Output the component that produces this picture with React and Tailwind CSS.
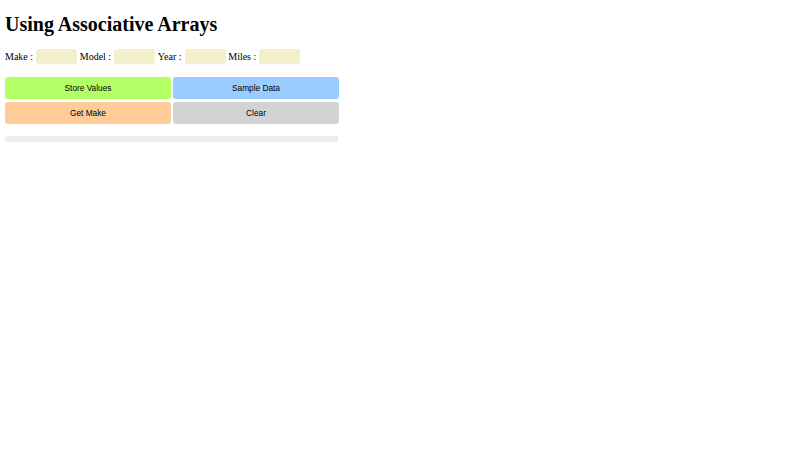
import React from 'react';

// Campos del formulario
const fields = ['Make', 'Model', 'Year', 'Miles'];

const buttons = [
  { label: 'Store Values', color: 'bg-[#b3ff66]' },
  { label: 'Sample Data', color: 'bg-[#99ccff]' },
  { label: 'Get Make', color: 'bg-[#ffcc99]' },
  { label: 'Clear', color: 'bg-[#d3d3d3]' },
];

export default function App() {
  return (
    <div className="min-h-[450px] bg-white px-[5px] pt-[13px] text-black" style={{ fontFamily: '"Liberation Serif", serif' }}>
      <h1 className="text-[20px] font-bold leading-[23px]">Using Associative Arrays</h1>

      <div className="mt-[13px] flex items-center text-[10px] leading-[15px] h-[15px]">
        {fields.map((f) => (
          <React.Fragment key={f}>
            <span className="mr-[3px]">{f} :</span>
            <input className="w-[41px] h-[15px] rounded-[3px] bg-[#f3eecb] border-0 outline-none mr-[2.7px]" />
          </React.Fragment>
        ))}
      </div>

      <div
        className="mt-[13px] grid w-[334px] grid-cols-2 gap-x-[2px] gap-y-[3px]"
        style={{ fontFamily: '"Liberation Sans", Arial, sans-serif' }}
      >
        {buttons.map((b) => (
          <button
            key={b.label}
            className={`h-[22px] rounded-[3px] text-[8.3px] text-black ${b.color}`}
          >
            {b.label}
          </button>
        ))}
      </div>

      <div className="mt-[12px] h-[6px] w-[333px] bg-[#eeeeee]" />
    </div>
  );
}
